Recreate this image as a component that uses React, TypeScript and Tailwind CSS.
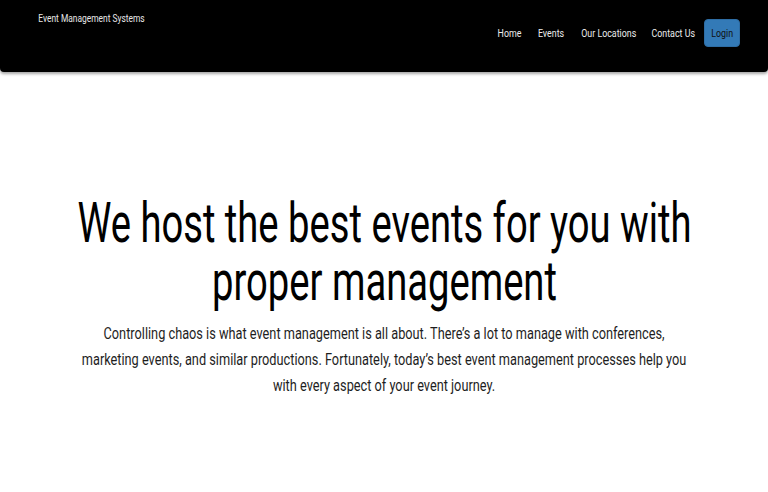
export default function App() {
  /* ----- nav links with the visual width each takes ----- */
  const links = [
    { label: "Home", w: "w-[23px]" },
    { label: "Events", w: "w-[25px]" },
    { label: "Our Locations", w: "w-[52px]" },
    { label: "Contact Us", w: "w-[41px]" },
  ];

  return (
    <div className="min-h-screen w-full overflow-x-hidden bg-white font-['Roboto',sans-serif]">
      {/* ========== NAVBAR ========== */}
      <header className="h-[72px] bg-black rounded-b-[4px] shadow-[0_2px_3px_rgba(0,0,0,0.35)] flex justify-between items-start pl-[38px] pr-[28px]">
        {/* brand */}
        <div className="pt-[12px] flex w-[107px] justify-center">
          <span className="whitespace-nowrap text-[10.5px] leading-[14px] text-[#e8e8e8] scale-x-[0.8]">
            Event Management Systems
          </span>
        </div>

        {/* links + login */}
        <nav className="mt-[19px] h-[28px] flex items-center gap-[18.5px]">
          {links.map((l) => (
            <a key={l.label} href="#" className={`flex justify-center ${l.w}`}>
              <span className="whitespace-nowrap text-[11.5px] leading-[14px] text-[#ececec] scale-x-[0.77]">
                {l.label}
              </span>
            </a>
          ))}
          <button className="-ml-[8.5px] w-[36px] h-[28px] flex items-center justify-center rounded-[4px] bg-[#337ab7] border border-[#2e6da4]">
            <span className="whitespace-nowrap text-[11.5px] leading-[14px] text-[#111] scale-x-[0.77]">
              Login
            </span>
          </button>
        </nav>
      </header>

      {/* ========== HERO ========== */}
      <main className="flex flex-col items-center pt-[122px]">
        <h1 className="shrink-0 whitespace-nowrap text-center text-[55px] leading-[58px] font-normal text-black scale-x-[0.694]">
          We host the best events for you with
          <br />
          proper management
        </h1>
        <p className="mt-[10px] shrink-0 whitespace-nowrap text-center text-[17px] leading-[26px] text-[#1e1e1e] scale-x-[0.75]">
          Controlling chaos is what event management is all about. There’s a lot to manage with conferences,
          <br />
          marketing events, and similar productions. Fortunately, today’s best event management processes help you
          <br />
          with every aspect of your event journey.
        </p>
      </main>
    </div>
  );
}
